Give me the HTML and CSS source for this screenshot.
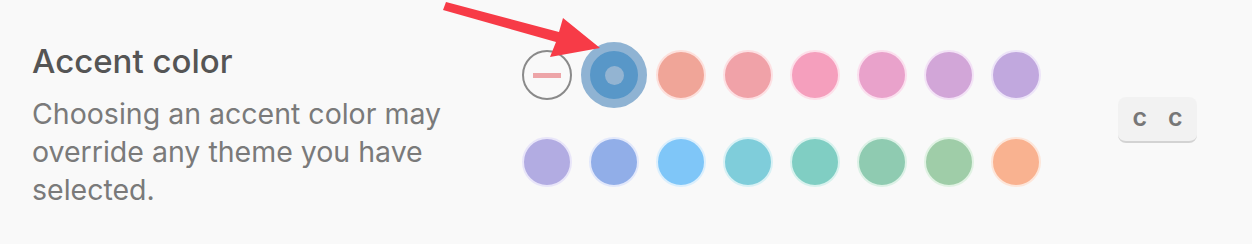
FILE: index.html
```html
<!DOCTYPE html>
<html>
<head>
<meta charset="utf-8">
<link rel="stylesheet" href="styles.css">
</head>
<body>
<div class="row">
  <div class="info">
    <div class="title">Accent color</div>
    <div class="desc">Choosing an accent color may override any theme you have selected.</div>
  </div>
  <div class="swatches">
    <div class="sw none"><span class="dash"></span></div>
    <div class="sw selected"><span class="dot"></span></div>
    <div class="sw c1"></div>
    <div class="sw c2"></div>
    <div class="sw c3"></div>
    <div class="sw c4"></div>
    <div class="sw c5"></div>
    <div class="sw c6"></div>
    <div class="sw c7"></div>
    <div class="sw c8"></div>
    <div class="sw c9"></div>
    <div class="sw c10"></div>
    <div class="sw c11"></div>
    <div class="sw c12"></div>
    <div class="sw c13"></div>
    <div class="sw c14"></div>
  </div>
  <div class="key"><span>c</span><span>c</span></div>
</div>
<svg class="arrow" width="1252" height="244" viewBox="0 0 1252 244">
  <polygon points="446,2 559,32 563,18 600,48 550,57 556,42 443,10" fill="#f73b47"/>
</svg>
</body>
</html>
```
FILE: styles.css
```css
html, body {
  margin: 0;
  padding: 0;
  background: #f9f9f9;
  width: 1252px;
  height: 244px;
  overflow: hidden;
  font-family: Inter, "Noto Sans", sans-serif;
}
.row {
  display: flex;
  align-items: flex-start;
  padding: 41px 0 0 32px;
}
.info {
  width: 490px;
  flex: none;
}
.title {
  font-size: 33px;
  line-height: 40px;
  font-weight: 500;
  color: #555555;
}
.desc {
  margin-top: 14px;
  font-size: 28.5px;
  line-height: 38px;
  color: #7a7a7a;
  width: 430px;
}
.swatches {
  margin-top: 9px;
  display: grid;
  grid-template-columns: repeat(8, 50px);
  grid-auto-rows: 50px;
  column-gap: 17px;
  row-gap: 37px;
  flex: none;
}
.sw {
  width: 50px;
  height: 50px;
  box-sizing: border-box;
  border-radius: 50%;
  border: 2.5px solid transparent;
  display: flex;
  align-items: center;
  justify-content: center;
}
.none {
  border: 2px solid #8a8a8a;
  background: transparent;
}
.dash {
  width: 28px;
  height: 5px;
  background: #eda5a8;
}
.selected {
  width: 66px;
  height: 66px;
  margin: -8px;
  border: 9px solid #8fb3d3;
  background: #5897c8;
}
.dot {
  width: 19px;
  height: 19px;
  border-radius: 50%;
  background: #93b4d2;
}
.c1 { background: #f0a598; border-color: #fde0dc; }
.c2 { background: #f0a2a8; border-color: #fde0e3; }
.c3 { background: #f59fbd; border-color: #fde0ea; }
.c4 { background: #e9a2cb; border-color: #fbdfee; }
.c5 { background: #d2a6d8; border-color: #f3e2f6; }
.c6 { background: #c1a8de; border-color: #ede4f8; }
.c7 { background: #b2ace2; border-color: #e8e5f9; }
.c8 { background: #91aee8; border-color: #e2e8fb; }
.c9 { background: #7fc6f8; border-color: #dbeffd; }
.c10 { background: #7fcdda; border-color: #d8f1f5; }
.c11 { background: #80cec3; border-color: #d8f2ee; }
.c12 { background: #8fcbb1; border-color: #dcf1e6; }
.c13 { background: #9fcda8; border-color: #e0f2e3; }
.c14 { background: #f9b290; border-color: #fde6da; }
.key {
  margin: 56px 0 0 77px;
  width: 79px;
  height: 46px;
  box-sizing: border-box;
  border-radius: 8px;
  background: #f2f2f2;
  border-bottom: 2px solid #d3d3d3;
  display: flex;
  align-items: center;
  justify-content: center;
  gap: 21px;
  font-size: 25px;
  font-weight: 600;
  color: #777777;
  padding-bottom: 4px;
}
.arrow {
  position: absolute;
  left: 0;
  top: 0;
  pointer-events: none;
}
```
